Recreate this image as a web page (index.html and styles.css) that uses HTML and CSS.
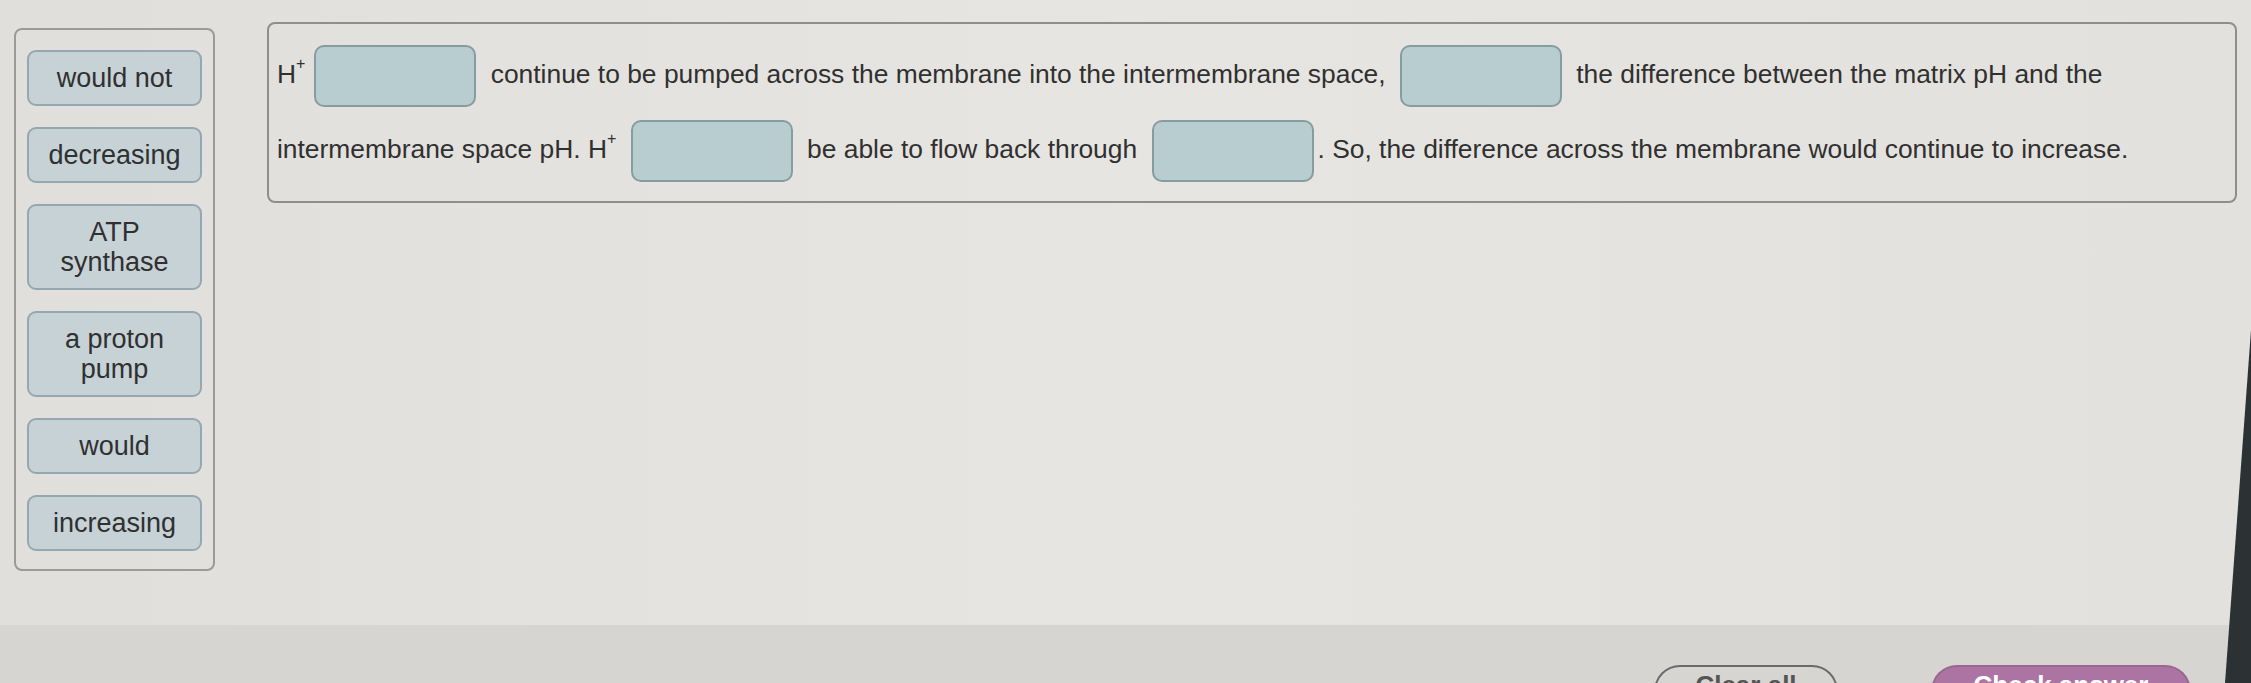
FILE: index.html
```html
<!DOCTYPE html>
<html lang="en">
<head>
<meta charset="utf-8">
<title>Drag the words</title>
<link rel="stylesheet" href="styles.css">
</head>
<body>
<div class="page">
  <main class="workspace">
    <div class="tray">
      <div class="chip">would not</div>
      <div class="chip">decreasing</div>
      <div class="chip">ATP synthase</div>
      <div class="chip">a proton pump</div>
      <div class="chip">would</div>
      <div class="chip">increasing</div>
    </div>
    <div class="panel">
      <p class="sentence">H<sup>+</sup><span class="drop drop-first"></span> continue to be pumped across the membrane into the intermembrane space, <span class="drop"></span> the difference between the matrix pH and the intermembrane space pH. H<sup>+</sup> <span class="drop"></span> be able to flow back through <span class="drop drop-last"></span>. So, the difference across the membrane would continue to increase.</p>
    </div>
  </main>
  <footer class="footer">
    <button class="btn btn-outline">Clear all</button>
    <button class="btn btn-primary">Check answer</button>
  </footer>
  <div class="bezel"></div>
</div>
</body>
</html>
```

FILE: styles.css
```css
html, body {
  margin: 0;
  padding: 0;
}

body {
  background: #e3e1dd;
  font-family: "Liberation Sans", Arial, sans-serif;
  color: #303030;
  overflow: hidden;
}

.page {
  position: relative;
  height: 683px;
  display: flex;
  flex-direction: column;
  overflow: hidden;
}

.workspace {
  flex: none;
  height: 625px;
  display: flex;
  align-items: flex-start;
  padding: 22px 0 0 14px;
  box-sizing: border-box;
  gap: 52px;
  background: linear-gradient(90deg, #e1dfdb 0%, #e7e5e1 50%, #e3e1dd 100%);
}

.tray {
  margin-top: 6px;
  width: 201px;
  box-sizing: border-box;
  border: 2px solid #9a9a9a;
  border-radius: 8px;
  padding: 20px 11px 18px;
  display: flex;
  flex-direction: column;
  gap: 21px;
}

.chip {
  width: 175px;
  box-sizing: border-box;
  background: #c7d2d7;
  border: 2px solid #94a8b2;
  border-radius: 9px;
  padding: 11px 8px;
  font-size: 27px;
  line-height: 30px;
  text-align: center;
  color: #303030;
}

.panel {
  width: 1970px;
  box-sizing: border-box;
  border: 2px solid #8e8e8e;
  border-radius: 8px;
  padding: 15px 10px 12px 8px;
}

.sentence {
  margin: 0;
  font-size: 26.4px;
  line-height: 31px;
  color: #303030;
}

.sentence sup {
  font-size: 16px;
  vertical-align: 14px;
  line-height: 0;
}

.drop {
  display: inline-block;
  width: 162px;
  height: 62px;
  box-sizing: border-box;
  background: #b7cdd0;
  border: 2px solid #879ca1;
  border-radius: 10px;
  vertical-align: middle;
  margin: 6px 7px 7px 7px;
}

.drop-first {
  margin-left: 9px;
}

.drop-last {
  margin-right: 4px;
}

.footer {
  flex: none;
  height: 58px;
  background: #d7d5d1;
  display: flex;
  justify-content: flex-end;
  align-items: flex-start;
  gap: 93px;
  padding: 40px 60px 0 0;
  box-sizing: border-box;
  overflow: visible;
}

.btn {
  font-family: "Liberation Sans", Arial, sans-serif;
  font-size: 26px;
  font-weight: 700;
  line-height: 30px;
  border-radius: 26px;
  padding: 3px 0 17px;
  box-sizing: border-box;
  text-align: center;
  flex: none;
}

.btn-outline {
  width: 184px;
  background: transparent;
  border: 2px solid #6a6a6e;
  color: #555;
}

.btn-primary {
  width: 260px;
  background: #ab74a2;
  border: 2px solid #9c6692;
  color: #ffffff;
}

.bezel {
  position: absolute;
  right: 0;
  bottom: 0;
  width: 26px;
  height: 353px;
  background: #2c3234;
  clip-path: polygon(100% 0, 100% 100%, 0 100%);
}
```
